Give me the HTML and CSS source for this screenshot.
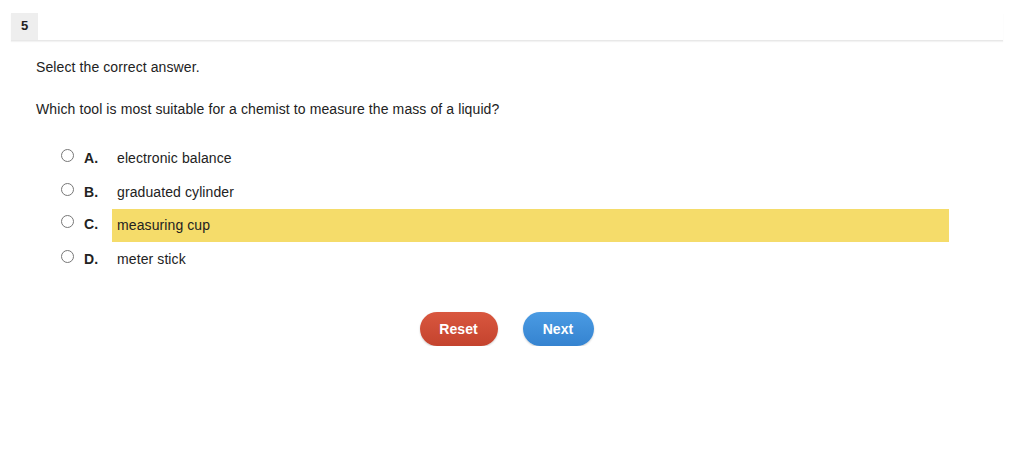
FILE: index.html
```html
<!DOCTYPE html>
<html>
<head>
<meta charset="utf-8">
<link rel="stylesheet" href="styles.css">
</head>
<body>
<div class="page">
  <div class="header">
    <div class="num">5</div>
  </div>
  <div class="content">
    <p class="instr">Select the correct answer.</p>
    <p class="question">Which tool is most suitable for a chemist to measure the mass of a liquid?</p>
    <div class="options">
      <div class="opt opt-a"><span class="radio"></span><span class="letter">A.</span><span class="text">electronic balance</span></div>
      <div class="opt opt-b"><span class="radio"></span><span class="letter">B.</span><span class="text">graduated cylinder</span></div>
      <div class="opt opt-c"><span class="radio"></span><span class="letter">C.</span><span class="text hl">measuring cup</span></div>
      <div class="opt opt-d"><span class="radio"></span><span class="letter">D.</span><span class="text">meter stick</span></div>
    </div>
    <div class="buttons">
      <button class="btn reset">Reset</button>
      <button class="btn next">Next</button>
    </div>
  </div>
</div>
</body>
</html>
```
FILE: styles.css
```css
html, body { margin: 0; padding: 0; background: #fff; }
body { font-family: "Liberation Sans", Arial, sans-serif; color: #222; font-size: 14px; }
.page { padding: 13px 9px 0 11px; }
.header { border-bottom: 1px solid #e8e8e8; height: 27px; box-shadow: 0 1px 1px #f3f3f3; }
.num { display: inline-block; width: 27px; height: 27px; background: #eeeeee; font-weight: bold; font-size: 13px; line-height: 26px; text-align: center; color: #222; }
.content { padding-left: 25px; letter-spacing: 0.1px; }
.instr { margin: 18px 0 0; line-height: 16px; }
.question { margin: 26px 0 0; line-height: 16px; }
.options { margin-top: 25px; width: 913px; }
.opt { display: flex; align-items: flex-start; height: 33px; }
.opt-a { height: 34px; }
.opt-b { height: 32px; }
.opt-c { height: 35px; }
.radio { border: 1px solid #777; border-radius: 50%; margin-left: 25px; margin-top: 7px; box-sizing: border-box; width: 13px; height: 13px; background: #fff; }
.letter { font-weight: bold; width: 28px; margin-left: 10px; line-height: 33px; }
.text { flex: 1; height: 33px; line-height: 33px; padding-left: 5px; }
.hl { background: #f5dc6a; margin-top: 0.5px; }
.buttons { display: flex; justify-content: center; gap: 25px; margin-top: 36px; margin-left: -26px; }
.btn { border: none; border-radius: 17px; height: 34px; color: #fff; font-family: "Liberation Sans", Arial, sans-serif; font-weight: bold; font-size: 14px; padding: 0; letter-spacing: 0.1px; }
.reset { width: 78px; background: linear-gradient(#d9573f, #c4432e); box-shadow: 0 1px 2px rgba(0,0,0,0.2); }
.next { width: 71px; background: linear-gradient(#4a9be3, #3583d0); box-shadow: 0 1px 2px rgba(0,0,0,0.2); }
```
